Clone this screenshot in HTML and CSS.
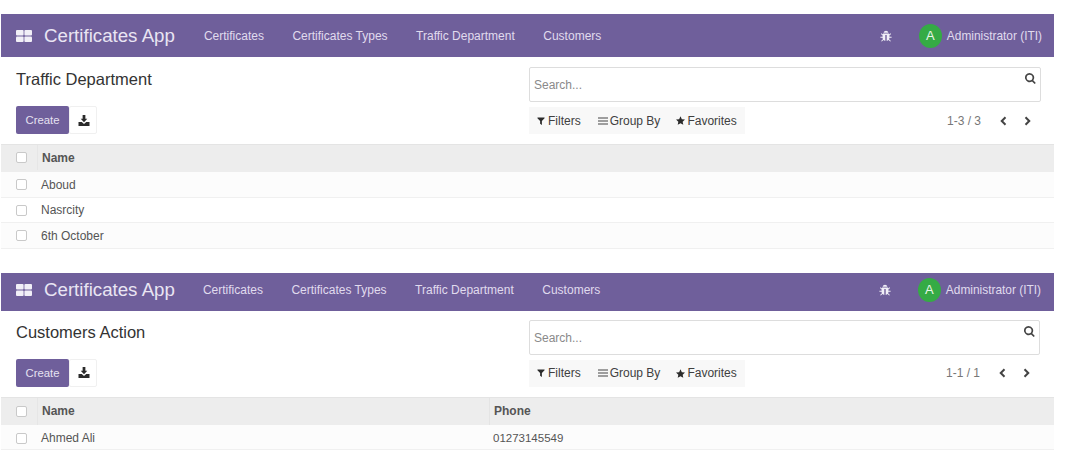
FILE: index.html
```html
<!DOCTYPE html>
<html lang="en">
<head>
<meta charset="utf-8">
<title>Certificates App</title>
<link rel="stylesheet" href="styles.css">
</head>
<body>
<svg class="defs" width="0" height="0" aria-hidden="true">
  <symbol id="i-apps" viewBox="0 0 16 12"><rect x="0" y="0" width="7.6" height="5.6" rx="1"/><rect x="8.4" y="0" width="7.6" height="5.600" rx="1"/><rect x="0" y="6.400" width="7.600" height="5.600" rx="1"/><rect x="8.400" y="6.400" width="7.600" height="5.600" rx="1"/></symbol>
  <symbol id="i-bug" viewBox="0 0 12 12"><path d="M3.600 2.800C3.900 1.500 4.800.8 6 .8s2.100.7 2.400 2z"/><path d="M3 3.600h6v.9l1.400-1.300.7.7L9.400 5.500v1.300h2.200v1H9.400c0 .6-.1 1.100-.3 1.500l1.800 1.600-.7.700-1.600-1.500c-.5.500-1.100.8-1.900.9V4.900H5.300v6.100c-.8-.1-1.400-.4-1.900-.9l-1.600 1.500-.7-.7 1.800-1.600c-.2-.4-.3-.9-.3-1.500H.4v-1h2.200V5.500L.9 3.900l.7-.7L3 4.500z"/></symbol>
  <symbol id="i-search" viewBox="0 0 12 12"><path fill-rule="evenodd" d="M5 0a5 5 0 0 1 4 8l2.800 2.800-1.300 1.200-2.800-2.800A5 5 0 1 1 5 0zm0 1.800a3.200 3.200 0 1 0 0 6.400 3.200 3.200 0 0 0 0-6.400z"/></symbol>
  <symbol id="i-download" viewBox="0 0 12 12"><path d="M4.500 0h3v4.200h2.100L6 7.900 2.400 4.200h2.100z"/><path d="M0 7.600h3.600L6 9.800l2.400-2.200H12V12H0z"/></symbol>
  <symbol id="i-filter" viewBox="0 0 8 9"><path d="M0 .5h8v1L5 4.500V9L3 7.500v-3L0 1.500z"/></symbol>
  <symbol id="i-bars" viewBox="0 0 10 8"><path d="M0 .5h10v1H0zM0 3.500h10v1H0zM0 6.500h10v1H0z"/></symbol>
  <symbol id="i-star" viewBox="0 0 10 10"><path d="M5 .3l1.500 3.200 3.500.4-2.600 2.400.7 3.400L5 8.100 1.900 9.700l.7-3.400L0 3.900l3.500-.4z"/></symbol>
  <symbol id="i-prev" viewBox="0 0 8 10"><path d="M5.800.5L7.200 2 4.200 5l3 3-1.400 1.500L1.300 5z"/></symbol>
  <symbol id="i-next" viewBox="0 0 8 10"><path d="M2.200.5L.8 2l3 3-3 3 1.400 1.500L6.700 5z"/></symbol>
</svg>

<main class="page">
  <section class="screen screen-first">
    <nav class="navbar navbar-tall">
      <svg class="icon-apps"><use href="#i-apps"/></svg>
      <span class="brand">Certificates App</span>
      <ul class="menu">
        <li>Certificates</li>
        <li>Certificates Types</li>
        <li>Traffic Department</li>
        <li>Customers</li>
      </ul>
      <svg class="icon-bug"><use href="#i-bug"/></svg>
      <span class="avatar">A</span>
      <span class="user">Administrator (ITI)</span>
    </nav>
    <div class="control">
      <div class="control-left">
        <h1 class="title">Traffic Department</h1>
        <div class="buttons">
          <button class="btn-create">Create</button>
          <button class="btn-export"><svg class="icon-download"><use href="#i-download"/></svg></button>
        </div>
      </div>
      <div class="control-right">
        <div class="search"><span class="placeholder">Search...</span><svg class="icon-search"><use href="#i-search"/></svg></div>
        <div class="tools">
          <div class="filters">
            <span class="filter filter-first"><svg class="icon-filter"><use href="#i-filter"/></svg>Filters</span>
            <span class="filter"><svg class="icon-bars"><use href="#i-bars"/></svg>Group By</span>
            <span class="filter"><svg class="icon-star"><use href="#i-star"/></svg>Favorites</span>
          </div>
          <div class="pager">
            <span class="pager-count">1-3 / 3</span>
            <svg class="icon-pager"><use href="#i-prev"/></svg>
            <svg class="icon-pager"><use href="#i-next"/></svg>
          </div>
        </div>
      </div>
    </div>
    <div class="table">
      <div class="row head"><span class="cell-check"><i class="check"></i></span><span class="cell-name">Name</span></div>
      <div class="row odd"><span class="cell-check"><i class="check"></i></span><span class="cell-name">Aboud</span></div>
      <div class="row"><span class="cell-check"><i class="check"></i></span><span class="cell-name">Nasrcity</span></div>
      <div class="row odd"><span class="cell-check"><i class="check"></i></span><span class="cell-name">6th October</span></div>
    </div>
  </section>

  <section class="screen screen-second">
    <nav class="navbar">
      <svg class="icon-apps"><use href="#i-apps"/></svg>
      <span class="brand">Certificates App</span>
      <ul class="menu">
        <li>Certificates</li>
        <li>Certificates Types</li>
        <li>Traffic Department</li>
        <li>Customers</li>
      </ul>
      <svg class="icon-bug"><use href="#i-bug"/></svg>
      <span class="avatar">A</span>
      <span class="user">Administrator (ITI)</span>
    </nav>
    <div class="control">
      <div class="control-left">
        <h1 class="title">Customers Action</h1>
        <div class="buttons">
          <button class="btn-create">Create</button>
          <button class="btn-export"><svg class="icon-download"><use href="#i-download"/></svg></button>
        </div>
      </div>
      <div class="control-right">
        <div class="search"><span class="placeholder">Search...</span><svg class="icon-search"><use href="#i-search"/></svg></div>
        <div class="tools">
          <div class="filters">
            <span class="filter filter-first"><svg class="icon-filter"><use href="#i-filter"/></svg>Filters</span>
            <span class="filter"><svg class="icon-bars"><use href="#i-bars"/></svg>Group By</span>
            <span class="filter"><svg class="icon-star"><use href="#i-star"/></svg>Favorites</span>
          </div>
          <div class="pager">
            <span class="pager-count">1-1 / 1</span>
            <svg class="icon-pager"><use href="#i-prev"/></svg>
            <svg class="icon-pager"><use href="#i-next"/></svg>
          </div>
        </div>
      </div>
    </div>
    <div class="table">
      <div class="row head"><span class="cell-check"><i class="check"></i></span><span class="cell-name cell-wide">Name</span><span class="cell-phone">Phone</span></div>
      <div class="row odd"><span class="cell-check"><i class="check"></i></span><span class="cell-name cell-wide">Ahmed Ali</span><span class="cell-phone">01273145549</span></div>
    </div>
  </section>
</main>
</body>
</html>
```

FILE: styles.css
```css
* { box-sizing: border-box; }
html, body { margin: 0; padding: 0; background: #fff; }
body {
  font-family: "Liberation Sans", Arial, sans-serif;
  font-size: 12px;
  color: #4c4c4c;
  overflow: hidden;
}
.defs { display: block; height: 0; }
.page { width: 1053px; margin-left: 1px; padding-top: 14px; }
.screen-second { margin-top: 24px; }

.navbar {
  display: flex;
  align-items: center;
  height: 38px;
  background: #6f5f9b;
  color: #e0dbee;
  padding-left: 15px;
  padding-bottom: 3px;
}
.navbar-tall { height: 43px; padding-bottom: 0; }
.icon-apps { width: 16px; height: 12px; fill: #f1eff7; flex: none; }
.brand { font-size: 18.7px; margin-left: 12px; color: #e9e5f3; }
.menu {
  display: flex;
  gap: 28.5px;
  list-style: none;
  margin: 0 0 0 29px;
  padding: 0;
  flex: 1;
}
.screen-second .menu { margin-left: 28px; }
.icon-bug { width: 12px; height: 12px; fill: #f1eff7; flex: none; }
.avatar {
  width: 23px;
  height: 24px;
  border-radius: 50%;
  background: #35ab45;
  color: #e9f5ea;
  font-size: 13px;
  line-height: 24px;
  text-align: center;
  margin-left: 27px;
  flex: none;
}
.user { margin-left: 5px; margin-right: 12px; color: #e0dbee; font-size: 11.9px; }
.screen-second .user { margin-right: 13px; }

.control {
  display: flex;
  padding: 10px 13px 10px 15px;
}
.screen-second .control { padding-top: 9px; padding-right: 14px; }
.control-left { width: 513px; flex: none; display: flex; flex-direction: column; justify-content: space-between; }
.control-right { flex: 1; display: flex; flex-direction: column; gap: 5px; }
.title {
  font-size: 16.5px;
  font-weight: 400;
  line-height: 24px;
  margin: 0;
  color: #333;
}
.buttons { display: flex; }
.btn-create {
  width: 53px;
  height: 28px;
  border: 0;
  border-radius: 2px;
  background: #6f5f9b;
  color: #e6e2f1;
  font: 11.3px "Liberation Sans", Arial, sans-serif;
  padding: 0;
}
.btn-export {
  width: 28px;
  height: 28px;
  border: 1px solid #f0f0f0;
  border-radius: 2px;
  background: #fff;
  padding: 0 0 0 2px;
  display: flex;
  align-items: center;
  justify-content: center;
}
.icon-download { width: 12px; height: 11px; fill: #2b2b2b; }

.search {
  height: 35px;
  border: 1px solid #ddd;
  border-radius: 2px;
  display: flex;
  justify-content: space-between;
  padding: 0 4px;
}
.placeholder { color: #8a8a8a; line-height: 35px; }
.icon-search { width: 11px; height: 11px; fill: #444; margin: 5px 0 0 0; }
.tools { display: flex; justify-content: space-between; height: 27px; }
.filters {
  display: flex;
  align-items: center;
  gap: 16px;
  width: 216px;
  background: #f8f8f8;
  padding-left: 8px;
  color: #404040;
}
.filter { display: flex; align-items: center; gap: 2px; }
.filter-first { gap: 3px; margin-right: 1px; }
.icon-filter { width: 8px; height: 8px; fill: #2b2b2b; }
.icon-bars { width: 10px; height: 8px; fill: #444; }
.icon-star { width: 9px; height: 9px; fill: #2b2b2b; }
.pager { display: flex; align-items: center; color: #777; padding-right: 9px; }
.pager-count { margin-right: 18px; }
.icon-pager { width: 8px; height: 10px; fill: #444; margin-left: 17px; }
.icon-pager:first-of-type { margin-left: 0; }

.row {
  display: flex;
  align-items: center;
  height: 25.5px;
  border-bottom: 1px solid #f0f0f0;
  color: #555;
  padding-top: 1px;
}
.screen-second .row.odd { padding-top: 3px; }
.row.odd { background: #fcfcfc; }
.head {
  height: 28px;
  background: #ededed;
  border-top: 1px solid #e4e4e4;
  border-bottom: 0;
  font-weight: 700;
  color: #555;
  padding-top: 0;
}
.screen-first .head { padding-bottom: 2px; }
.cell-check { width: 37px; padding-left: 15px; flex: none; display: flex; align-items: center; height: 100%; }
.head .cell-check { border-right: 1px solid #e6e6e6; }
.check {
  display: block;
  width: 11px;
  height: 11px;
  border: 1px solid #c9c9c9;
  border-radius: 2px;
  background: #fff;
}
.cell-name { padding-left: 3px; }
.head .cell-name { padding-left: 4px; }
.cell-wide { width: 452px; flex: none; align-self: stretch; display: flex; align-items: center; }
.head .cell-wide { border-right: 1px solid #e4e4e4; }
.cell-phone { padding-left: 3px; font-size: 11.5px; }
.head .cell-phone { padding-left: 4px; font-size: 12px; }
```
